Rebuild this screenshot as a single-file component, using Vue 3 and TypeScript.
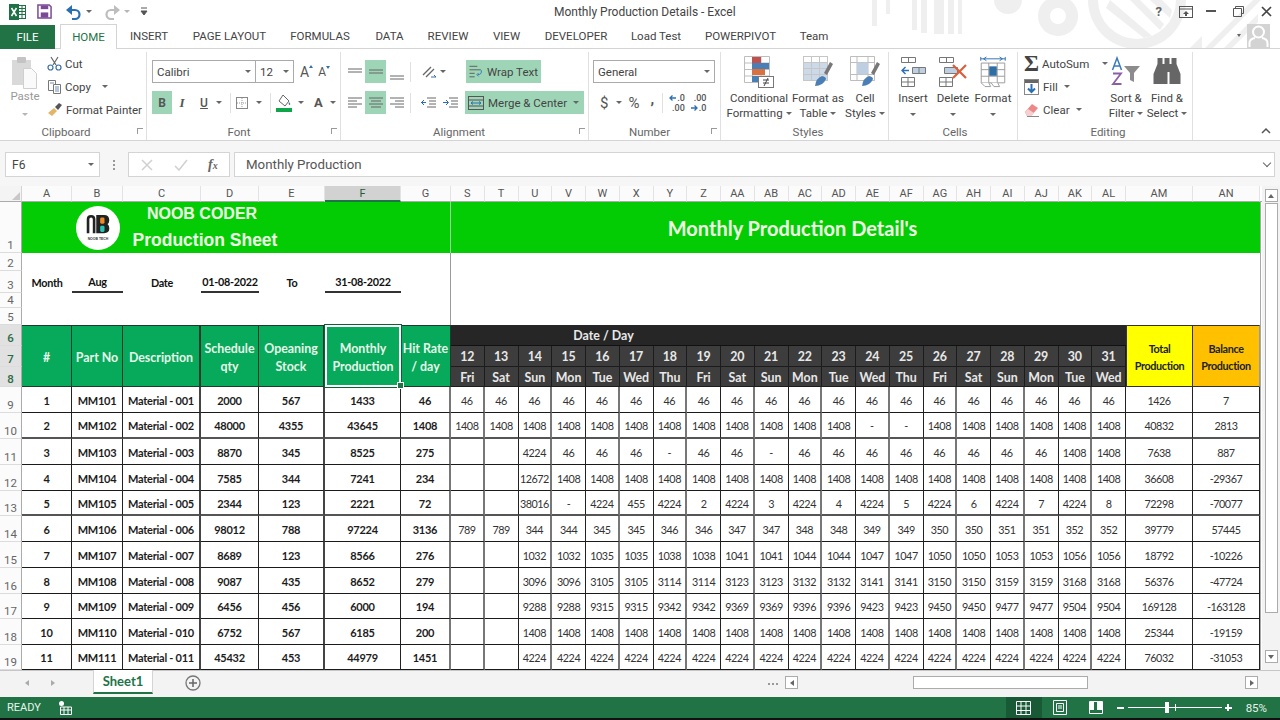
<script setup lang="ts">
interface Row {
  no: number
  head: number
  qty: number
  stock: number
  prod: number
  rate: number
  days: (number | string)[]
  total: number
  bal: number
  thick?: boolean
}

const rep = (v: number | string, n: number) => Array.from({ length: n }, () => v)
const pairs = (start: number, step: number) =>
  Array.from({ length: 18 }, (_, i) => start + Math.floor(i / 2) * step)

const tabs = [
  { t: 'INSERT', w: 64 },
  { t: 'PAGE LAYOUT', w: 97 },
  { t: 'FORMULAS', w: 84 },
  { t: 'DATA', w: 55 },
  { t: 'REVIEW', w: 62 },
  { t: 'VIEW', w: 55 },
  { t: 'DEVELOPER', w: 84 },
  { t: 'Load Test', w: 76 },
  { t: 'POWERPIVOT', w: 93 },
  { t: 'Team', w: 54 },
]

const letters = ['S','T','U','V','W','X','Y','Z','AA','AB','AC','AD','AE','AF','AG','AH','AI','AJ','AK','AL']
const leftLetters = ['A','B','C','D','E','F','G']
const dates = Array.from({ length: 20 }, (_, i) => 12 + i)
const names = ['Sun','Mon','Tue','Wed','Thu','Fri','Sat']
const dayNames = dates.map((d) => names[d % 7])

const leftHeads = [
  ['#'], ['Part No'], ['Description'], ['Schedule', 'qty'], ['Opeaning', 'Stock'],
  ['Monthly', 'Production'], ['Hit Rate', '/ day'],
]

const fifth: (number | string)[] = [38016, '-']
for (let i = 0; i < 8; i++) fifth.push(4224, i === 0 ? 455 : i + 1)

const rows: Row[] = [
  { no: 1, head: 9, qty: 2000, stock: 567, prod: 1433, rate: 46, days: rep(46, 20), total: 1426, bal: 7 },
  { no: 2, head: 10, qty: 48000, stock: 4355, prod: 43645, rate: 1408, days: [...rep(1408, 12), '-', '-', ...rep(1408, 6)], total: 40832, bal: 2813, thick: true },
  { no: 3, head: 11, qty: 8870, stock: 345, prod: 8525, rate: 275, days: ['', '', 4224, 46, 46, 46, '-', 46, 46, '-', ...rep(46, 8), 1408, 1408], total: 7638, bal: 887 },
  { no: 4, head: 12, qty: 7585, stock: 344, prod: 7241, rate: 234, days: ['', '', 12672, ...rep(1408, 17)], total: 36608, bal: -29367 },
  { no: 5, head: 13, qty: 2344, stock: 123, prod: 2221, rate: 72, days: ['', '', ...fifth], total: 72298, bal: -70077, thick: true },
  { no: 6, head: 14, qty: 98012, stock: 788, prod: 97224, rate: 3136, days: [789, 789, ...pairs(344, 1)], total: 39779, bal: 57445 },
  { no: 7, head: 15, qty: 8689, stock: 123, prod: 8566, rate: 276, days: ['', '', ...pairs(1032, 3)], total: 18792, bal: -10226 },
  { no: 8, head: 16, qty: 9087, stock: 435, prod: 8652, rate: 279, days: ['', '', ...pairs(3096, 9)], total: 56376, bal: -47724 },
  { no: 9, head: 17, qty: 6456, stock: 456, prod: 6000, rate: 194, days: ['', '', ...pairs(9288, 27)], total: 169128, bal: -163128 },
  { no: 10, head: 18, qty: 6752, stock: 567, prod: 6185, rate: 200, days: ['', '', ...rep(1408, 18)], total: 25344, bal: -19159 },
  { no: 11, head: 19, qty: 45432, stock: 453, prod: 44979, rate: 1451, days: ['', '', ...rep(4224, 18)], total: 76032, bal: -31053 },
]

const pad = (n: number) => String(n).padStart(3, '0')
</script>

<template>
  <div class="app">
    <!-- title bar -->
    <header class="titlebar">
      <svg class="decor" width="430" height="48" viewBox="850 0 430 48">
        <g fill="#efefef">
          <rect x="872" y="0" width="5" height="26" />
          <rect x="886" y="0" width="4" height="14" />
          <rect x="912" y="0" width="5" height="30" />
          <rect x="921" y="0" width="6" height="33" />
          <rect x="934" y="0" width="10" height="34" />
          <rect x="948" y="0" width="6" height="34" />
          <rect x="958" y="0" width="4" height="34" />
          <circle cx="1008" cy="0" r="14" />
          <path d="M1058 -4a20 20 0 1 0 .1 0zm0 12a8 8 0 1 1-.1 0z" fill-rule="evenodd" />
          <path d="M1088 0a49 49 0 0 0 98 0h-10a39 39 0 0 1-78 0z" />
          <path d="M1110 0l-4 8 38 30 8-2zM1130 0l30 30 4-6-24-24zM1150 0l20 18 2-8-10-10z" />
          <path d="M1205 48l48-48h8l-48 48zM1224 48l34-34v8l-26 26zM1190 48l12-12v12z" />
        </g>
      </svg>
      <div class="qat">
        <svg width="17" height="18" viewBox="0 0 17 18">
          <rect x="5.5" y="2.5" width="11" height="13" fill="#fff" stroke="#1e7145" />
          <path d="M10 5.500h6M10 8.500h6M10 11.500h6M13 3v12" stroke="#1e7145" />
          <rect x="0" y="1" width="10" height="16" fill="#1e7145" />
          <path d="M2.500 5l5 8M7.500 5l-5 8" stroke="#fff" stroke-width="1.600" />
        </svg>
        <svg class="save" width="15" height="15" viewBox="0 0 16 16">
          <path d="M1 1h12l2 2v12H1z" fill="#fff" stroke="#7b4a97" stroke-width="1.600" />
          <rect x="4" y="1.500" width="8" height="4" fill="#7b4a97" />
          <rect x="4" y="9" width="8" height="5.500" fill="#7b4a97" />
        </svg>
        <svg class="undo" width="18" height="16" viewBox="0 0 18 16">
          <path d="M3 6h7a4.500 4.500 0 0 1 0 9H7" fill="none" stroke="#2b6fb3" stroke-width="2.200" />
          <path d="M7 1v10L1 6z" fill="#2b6fb3" />
        </svg>
        <span class="caret dark"></span>
        <svg class="redo" width="18" height="16" viewBox="0 0 18 16">
          <path d="M15 6H8a4.500 4.500 0 0 0 0 9h3" fill="none" stroke="#bdbdbd" stroke-width="2.200" />
          <path d="M11 1v10l6-5z" fill="#bdbdbd" />
        </svg>
        <span class="caret light"></span>
        <svg class="more" width="8" height="9" viewBox="0 0 8 9">
          <path d="M1 1h6M1 4h6L4 8z" stroke="#555" fill="#555" />
        </svg>
      </div>
      <div class="doc">Monthly Production Details - Excel</div>
      <div class="winbtns">
        <span class="help">?</span>
        <svg class="rb-mode" width="14" height="12" viewBox="0 0 14 12">
          <rect x="0.5" y="0.5" width="13" height="11" fill="none" stroke="#555" />
          <path d="M0 3h14" stroke="#555" />
          <path d="M7 5l3 3H8v2H6V8H4z" fill="#555" />
        </svg>
        <svg width="10" height="3" viewBox="0 0 10 3"><rect width="10" height="2" fill="#555" /></svg>
        <svg width="11" height="11" viewBox="0 0 11 11">
          <path d="M2.500 2.500V.5h8v7H8.500M.5 2.500h8v8h-8z" fill="none" stroke="#555" />
        </svg>
        <svg width="11" height="11" viewBox="0 0 11 11">
          <path d="M1 1l9 9M10 1l-9 9" stroke="#444" stroke-width="1.700" />
        </svg>
      </div>
    </header>

    <!-- ribbon tabs -->
    <nav class="tabs">
      <div class="tab-file">FILE</div>
      <div class="tab-home">HOME</div>
      <div v-for="t in tabs" :key="t.t" class="tab" :style="{ width: t.w + 'px' }">{{ t.t }}</div>
      <span class="account-caret"></span>
      <div class="avatar">
        <svg width="23" height="23" viewBox="0 0 23 23">
          <circle cx="11.500" cy="8" r="5.500" fill="none" stroke="#fff" stroke-width="2" />
          <path d="M2.500 23v-4q0-4 5.500-5M20.500 23v-4q0-4-5.500-5" fill="none" stroke="#fff" stroke-width="2" />
        </svg>
      </div>
    </nav>

    <!-- ribbon -->
    <section class="ribbon">
      <div class="group g-clip">
        <div class="g-body clip-body">
          <div class="paste">
            <svg width="26" height="33" viewBox="0 0 26 33">
              <rect x="0" y="4" width="19" height="25" fill="#d9d9d9" />
              <rect x="5" y="1" width="9" height="6" rx="1" fill="#c4c4c4" />
              <path d="M11.500 12.500h8l5 5v15h-13z" fill="#fafafa" stroke="#cfcfcf" />
            </svg>
            <span class="t-dim">Paste</span>
            <span class="caret light"></span>
          </div>
          <div class="clip-list">
            <div class="clip-item">
              <svg width="15" height="15" viewBox="0 0 15 15">
                <path d="M4 1l5 8M11 1L6 9" stroke="#666" stroke-width="1.200" />
                <circle cx="3.500" cy="11.500" r="2.500" fill="none" stroke="#3a6ea5" stroke-width="1.200" />
                <circle cx="11.500" cy="11.500" r="2.500" fill="none" stroke="#3a6ea5" stroke-width="1.200" />
              </svg>
              <span>Cut</span>
            </div>
            <div class="clip-item">
              <svg width="15" height="15" viewBox="0 0 15 15">
                <path d="M1.500 1.500h7v10h-7z" fill="#fff" stroke="#777" />
                <path d="M6.500 5.500h7v9h-7z" fill="#fff" stroke="#777" />
                <path d="M8 8h4M8 10h4M8 12h4M3 4h4" stroke="#6a8fb5" />
              </svg>
              <span>Copy</span>
              <span class="caret dark ml8"></span>
            </div>
            <div class="clip-item">
              <svg width="16" height="15" viewBox="0 0 16 15">
                <path d="M1 11l6-5 3 3-5 5z" fill="#e3b566" />
                <path d="M8 5l4-4 3 2-4 5z" fill="#555" />
              </svg>
              <span>Format Painter</span>
            </div>
          </div>
        </div>
        <div class="g-label has-launcher">Clipboard<span class="launcher"></span></div>
      </div>

      <div class="group g-font">
        <div class="g-body two-rows">
          <div class="r">
            <div class="select font-name"><span>Calibri</span><span class="caret dark"></span></div>
            <div class="select font-size"><span>12</span><span class="caret dark"></span></div>
            <span class="grow-a big">A<i></i></span>
            <span class="grow-a small">A<i></i></span>
          </div>
          <div class="r">
            <span class="fbtn on b">B</span>
            <span class="fbtn i">I</span>
            <span class="fbtn u">U</span>
            <span class="caret dark"></span>
            <span class="vsep s1"></span>
            <svg class="ml5" width="12" height="12" viewBox="0 0 12 12">
              <rect x="0.500" y="0.500" width="11" height="11" fill="none" stroke="#888" />
              <path d="M6 1v10M1 6h10" stroke="#999" stroke-dasharray="1 1" />
            </svg>
            <span class="caret dark ml8"></span>
            <span class="vsep s1"></span>
            <svg class="ml5" width="17" height="18" viewBox="0 0 17 18">
              <path d="M7 1l6 6-4 5-6-5z" fill="#fff" stroke="#666" />
              <path d="M13 8q2 2 1 3-2 0-1-3z" fill="#3a6ea5" />
              <rect x="0" y="14" width="16" height="4" fill="#0fa54b" />
            </svg>
            <span class="caret dark ml5"></span>
            <span class="font-color">A</span>
            <span class="caret dark ml7"></span>
          </div>
        </div>
        <div class="g-label has-launcher">Font<span class="launcher"></span></div>
      </div>

      <div class="group g-align">
        <div class="g-body two-rows">
          <div class="r">
            <span class="abtn"><svg width="14" height="8" viewBox="0 0 14 8"><path d="M0 1h14M0 4h14" stroke="#666" /></svg></span>
            <span class="abtn on"><svg width="14" height="8" viewBox="0 0 14 8"><path d="M0 2h14M0 5h14" stroke="#666" /></svg></span>
            <span class="abtn va-b"><svg width="14" height="8" viewBox="0 0 14 8"><path d="M0 2h14M0 5h14" stroke="#666" /></svg></span>
            <span class="vsep s2"></span>
            <svg class="ml10" width="16" height="14" viewBox="0 0 16 14">
              <path d="M2 10l8-8M5 12l8-8" stroke="#666" stroke-width="1.300" />
              <path d="M10 12h5l-2-2" fill="none" stroke="#3a6ea5" />
            </svg>
            <span class="caret dark ml3"></span>
            <div class="wide-btn wrap">
              <svg width="16" height="14" viewBox="0 0 16 14">
                <path d="M.5.500h9M.5 4.500h13M.5 8.500h6M.5 12.500h6" stroke="#555" />
                <path d="M14 5q1 5-4 5M11 8l-2 2 2 2" fill="none" stroke="#2b6fb3" />
              </svg>
              <span>Wrap Text</span>
            </div>
          </div>
          <div class="r">
            <span class="abtn"><svg width="14" height="11" viewBox="0 0 14 11"><path d="M0 1h14M0 4h9M0 7h14M0 10h9" stroke="#666" /></svg></span>
            <span class="abtn on"><svg width="14" height="11" viewBox="0 0 14 11"><path d="M0 1h14M2 4h10M0 7h14M2 10h10" stroke="#666" /></svg></span>
            <span class="abtn"><svg width="14" height="11" viewBox="0 0 14 11"><path d="M0 1h14M5 4h9M0 7h14M5 10h9" stroke="#666" /></svg></span>
            <span class="vsep s2"></span>
            <svg class="ml10" width="15" height="11" viewBox="0 0 15 11">
              <path d="M6 1h9M8 4h7M8 7h7M6 10h9" stroke="#666" />
              <path d="M0 5.500h5M3 3L.5 5.500 3 8" fill="none" stroke="#2b6fb3" />
            </svg>
            <svg class="ml7" width="15" height="11" viewBox="0 0 15 11">
              <path d="M6 1h9M8 4h7M8 7h7M6 10h9" stroke="#666" />
              <path d="M0 5.500h5M3 3l2.500 2.500L3 8" fill="none" stroke="#2b6fb3" />
            </svg>
            <div class="wide-btn merge">
              <svg width="16" height="14" viewBox="0 0 16 14">
                <rect x="0.500" y="0.500" width="15" height="13" fill="none" stroke="#555" />
                <path d="M1 4h14M1 10h14" stroke="#555" />
                <path d="M3 7h10M5 5.500L3 7l2 1.500M11 5.500L13 7l-2 1.500" fill="none" stroke="#2b6fb3" />
              </svg>
              <span>Merge &amp; Center</span>
              <span class="caret dark ml-a"></span>
            </div>
          </div>
        </div>
        <div class="g-label has-launcher">Alignment<span class="launcher"></span></div>
      </div>

      <div class="group g-num">
        <div class="g-body two-rows">
          <div class="r">
            <div class="select num-fmt"><span>General</span><span class="caret dark"></span></div>
          </div>
          <div class="r num-row">
            <span class="dollar">$</span>
            <span class="caret dark ml8"></span>
            <span class="pct">%</span>
            <span class="comma">,</span>
            <span class="vsep s3"></span>
            <span class="dec d1">
              <span class="dec-l"><svg width="7" height="6" viewBox="0 0 7 6"><path d="M7 3H1M3.500 .5L1 3l2.500 2.500" fill="none" stroke="#2b6fb3" stroke-width="1.300" /></svg>.0</span>
              <span class="dec-l">.00</span>
            </span>
            <span class="dec d2">
              <span class="dec-l">.00</span>
              <span class="dec-l"><svg width="7" height="6" viewBox="0 0 7 6"><path d="M0 3h6M3.500 .5L6 3 3.500 5.500" fill="none" stroke="#2b6fb3" stroke-width="1.300" /></svg>.0</span>
            </span>
          </div>
        </div>
        <div class="g-label has-launcher">Number<span class="launcher"></span></div>
      </div>

      <div class="group g-styles">
        <div class="g-body bigs">
          <div class="big-btn w62">
            <svg width="30" height="32" viewBox="0 0 30 32">
              <path d="M.5.500h25v26H.5zM8.500.500v26M17 .500v26M.5 7h25M.5 13.500h25M.5 20h25" fill="#fff" stroke="#bdbdbd" />
              <rect x="8" y="1" width="9" height="6" fill="#c0504d" />
              <rect x="8" y="7" width="17" height="6" fill="#4a7fb5" />
              <rect x="8" y="13" width="13" height="6" fill="#d9703f" />
              <rect x="8" y="20" width="6" height="6" fill="#4a7fb5" />
              <rect x="14.500" y="20.500" width="15" height="11" fill="#fff" stroke="#777" />
              <path d="M19 24h6M19 27h6M24 22l-4 8" stroke="#444" />
            </svg>
            <span>Conditional</span>
            <span>Formatting<i class="caret dark"></i></span>
          </div>
          <div class="big-btn w58">
            <svg width="30" height="32" viewBox="0 0 30 32">
              <path d="M.5.500h24v24H.5zM8.500.500v24M16.500.500v24M.5 6.500h24M.5 12.500h24M.5 18.500h24" fill="#fff" stroke="#bdbdbd" />
              <rect x="1" y="7" width="23" height="17" fill="#bfcfe2" opacity="0.800" />
              <path d="M.5.500h24v24H.5zM8.500.500v24M16.500.500v24M.5 6.500h24M.5 12.500h24M.5 18.500h24" fill="none" stroke="#c6c6c6" />
              <path d="M21 17l6-11 3 2-6 11z" fill="#777" />
              <path d="M12 30q1-8 7-10 4 1 4 3-3 7-11 7z" fill="#4a7fb5" />
            </svg>
            <span>Format as</span>
            <span>Table<i class="caret dark"></i></span>
          </div>
          <div class="big-btn w40">
            <svg width="30" height="32" viewBox="0 0 30 32">
              <path d="M.5.500h24v24H.5zM.5 6.500h24M.5 18.500h24M7 .500v24M18 .500v24" fill="#fff" stroke="#bdbdbd" />
              <rect x="7" y="6.500" width="11" height="12" fill="#bfcfe2" />
              <path d="M21 17l6-11 3 2-6 11z" fill="#777" />
              <path d="M12 30q1-8 7-10 4 1 4 3-3 7-11 7z" fill="#4a7fb5" />
            </svg>
            <span>Cell</span>
            <span>Styles<i class="caret dark"></i></span>
          </div>
        </div>
        <div class="g-label">Styles</div>
      </div>

      <div class="group g-cells">
        <div class="g-body bigs">
          <div class="big-btn w40">
            <svg width="26" height="32" viewBox="0 0 26 32">
              <path d="M1.500 1.500h14v5h-14zM8.500 1.500v5M1.500 21.500h13v9h-13zM8 21.500v9M1.500 26h13" fill="#fff" stroke="#777" />
              <path d="M12.500 11.500h13v6h-13zM19 11.500v6" fill="#bfcfe2" stroke="#777" />
              <path d="M2 14.500h7M5.500 11L2 14.500 5.500 18" fill="none" stroke="#2b6fb3" stroke-width="1.400" />
            </svg>
            <span>Insert</span>
            <i class="caret dark mt"></i>
          </div>
          <div class="big-btn w40">
            <svg width="30" height="32" viewBox="0 0 30 32">
              <path d="M1.500 1.500h14v5h-14zM8.500 1.500v5M1.500 21.500h13v9h-13zM8 21.500v9M1.500 26h13" fill="#fff" stroke="#777" />
              <path d="M6.500 11.500h13v6h-13z" fill="#bfcfe2" stroke="#777" />
              <path d="M15 9l13 13M28 9L15 22" stroke="#d9603a" stroke-width="2.200" />
            </svg>
            <span>Delete</span>
            <i class="caret dark mt"></i>
          </div>
          <div class="big-btn w40">
            <svg width="28" height="32" viewBox="0 0 28 34">
              <path d="M1 3h26M1 1v4M27 1v4" stroke="#2b6fb3" />
              <path d="M4 3l3-2M4 3l3 2M24 3l-3-2M24 3l-3 2" stroke="#2b6fb3" />
              <path d="M1.500 7.500h25v21H1.500zM9.500 7.500v21M18.500 7.500v21M1.500 14.500h25M1.500 21.500h25" fill="#fff" stroke="#999" />
              <rect x="10" y="11" width="8" height="10" fill="#2f6ea5" />
              <path d="M1.500 28.500l4 4h6l-2-4M12 28.500l3 4h6l-2-4" fill="#fff" stroke="#999" />
            </svg>
            <span>Format</span>
            <i class="caret dark mt"></i>
          </div>
        </div>
        <div class="g-label">Cells</div>
      </div>

      <div class="group g-edit">
        <div class="g-body edit-body">
          <div class="edit-list">
            <div class="edit-item">
              <span class="sigma">Σ</span><span>AutoSum</span><span class="caret dark ml10"></span>
            </div>
            <div class="edit-item">
              <svg width="16" height="16" viewBox="0 0 16 16">
                <rect x="0.500" y="0.500" width="14" height="15" fill="#fff" stroke="#888" />
                <rect x="1" y="1" width="13" height="3" fill="#666" />
                <path d="M7.500 5v8M4 9.500l3.500 3.500L11 9.500" fill="none" stroke="#2b6fb3" stroke-width="2" />
              </svg>
              <span>Fill</span><span class="caret dark ml3"></span>
            </div>
            <div class="edit-item">
              <svg width="16" height="14" viewBox="0 0 16 14">
                <path d="M1 9l7-8 6 4-7 8H3z" fill="#e88" />
                <path d="M1 9l3-3 6 4-3 3H3z" fill="#f6d0d0" />
                <path d="M3 13.500h12" stroke="#888" />
              </svg>
              <span>Clear</span><span class="caret dark ml3"></span>
            </div>
          </div>
          <div class="big-btn w40 sort">
            <svg width="30" height="32" viewBox="0 0 30 32">
              <path d="M13 10h16l-6 7v9l-4-2v-7z" fill="#8c8c8c" />
              <path d="M1.500 14L6 2l4.500 12M3.500 10h5" fill="none" stroke="#3a7ab8" stroke-width="1.500" />
              <path d="M2 17.500h8L2 28h8.500" fill="none" stroke="#8b5fa8" stroke-width="1.800" />
            </svg>
            <span>Sort &amp;</span>
            <span>Filter<i class="caret dark"></i></span>
          </div>
          <div class="big-btn w40 find">
            <svg width="28" height="32" viewBox="0 0 28 32">
              <path d="M5 2h5v6h2V2h4v0h1v6h2V2h5v6l4 10v10h-11V16h-2v12H1V18l4-10z" fill="#666" transform="translate(-0.500 0)" />
            </svg>
            <span>Find &amp;</span>
            <span>Select<i class="caret dark"></i></span>
          </div>
        </div>
        <div class="g-label">Editing</div>
      </div>
      <svg class="collapse" width="10" height="7" viewBox="0 0 10 7">
        <path d="M1 6l4-4 4 4" fill="none" stroke="#555" stroke-width="1.500" />
      </svg>
    </section>

    <!-- formula bar -->
    <section class="formula">
      <div class="namebox"><span>F6</span><span class="caret dark"></span></div>
      <div class="dots"><i></i><i></i><i></i></div>
      <div class="fx-box">
        <svg width="12" height="12" viewBox="0 0 12 12"><path d="M1 1l10 10M11 1L1 11" stroke="#d0d0d0" stroke-width="1.500" /></svg>
        <svg width="14" height="12" viewBox="0 0 14 12"><path d="M1 7l4 4 8-10" fill="none" stroke="#d0d0d0" stroke-width="1.500" /></svg>
        <span class="fx">f<small>x</small></span>
      </div>
      <div class="f-input">
        <span>Monthly Production</span>
        <span class="f-caret"></span>
      </div>
    </section>

    <!-- sheet -->
    <main class="sheet">
      <div class="grid">
        <div class="corner"><svg width="10" height="10" viewBox="0 0 10 10"><path d="M9 1v8H1z" fill="#c8c8c8" /></svg></div>
        <div v-for="l in leftLetters" :key="l" class="col-h" :class="{ sel: l === 'F' }">{{ l }}</div>
        <div v-for="l in letters" :key="l" class="col-h">{{ l }}</div>
        <div class="col-h">AM</div>
        <div class="col-h">AN</div>
        <div class="col-h end"></div>

        <!-- row 1 -->
        <div class="row-h">1</div>
        <div class="banner-left">
          <div class="logo">
            <svg width="26" height="32" viewBox="0 0 30 36">
              <path d="M2 24V8q0-5 5-5t5 5v16H9V8q0-2-2-2T5 8v16z" fill="#222" />
              <path d="M13 3h9q6 0 6 6 0 3-2 4.500 2 1.500 2 4.500v1q0 5-6 5h-9z" fill="#222" />
              <rect x="17.500" y="6" width="5" height="7" rx="1.500" fill="#f08a24" />
              <rect x="17.500" y="15.500" width="5" height="7" rx="1.500" fill="#27c3b5" />
              <text x="15" y="32" text-anchor="middle" font-size="4" font-family="Liberation Sans, sans-serif" font-weight="700" fill="#333">NOOB TECH</text>
            </svg>
          </div>
          <div class="brand">
            <div class="brand-1">NOOB CODER</div>
            <div class="brand-2">Production Sheet</div>
          </div>
        </div>
        <div class="banner-right">Monthly Production Detail's</div>
        <div class="filler"></div>

        <!-- rows 2-5 -->
        <div class="row-h">2</div>
        <div class="blank span7"></div>
        <div class="blank-right"></div>
        <div class="row-h">3</div>
        <div class="info">Month</div>
        <div class="info ul">Aug</div>
        <div class="info">Date</div>
        <div class="info ul">01-08-2022</div>
        <div class="info">To</div>
        <div class="info ul">31-08-2022</div>
        <div class="info last"></div>
        <div class="row-h">4</div>
        <div class="blank span7"></div>
        <div class="row-h">5</div>
        <div class="blank span7"></div>

        <!-- header rows 6-8 -->
        <div class="row-h sel">6</div>
        <div
          v-for="(h, i) in leftHeads"
          :key="i"
          class="head"
          :class="{ selected: i === 5, 'thick-r': i === 2 || i === 4 }"
        >
          <span v-for="line in h" :key="line">{{ line }}</span>
        </div>
        <div class="date-day">Date / Day</div>
        <div class="head-total">Total<br />Production</div>
        <div class="head-bal">Balance<br />Production</div>
        <div class="filler"></div>

        <div class="row-h sel">7</div>
        <div v-for="d in dates" :key="d" class="date-c">{{ d }}</div>
        <div class="filler"></div>

        <div class="row-h sel">8</div>
        <div v-for="(d, i) in dayNames" :key="i" class="date-n">{{ d }}</div>
        <div class="filler"></div>

        <!-- data rows -->
        <template v-for="r in rows" :key="r.no">
          <div class="row-h">{{ r.head }}</div>
          <div class="cell bold" :class="{ tb: r.thick }">{{ r.no }}</div>
          <div class="cell bold" :class="{ tb: r.thick }">MM{{ 100 + r.no }}</div>
          <div class="cell bold thick-r" :class="{ tb: r.thick }">Material - {{ pad(r.no) }}</div>
          <div class="cell bold" :class="{ tb: r.thick }">{{ r.qty }}</div>
          <div class="cell bold thick-r" :class="{ tb: r.thick }">{{ r.stock }}</div>
          <div class="cell bold" :class="{ tb: r.thick }">{{ r.prod }}</div>
          <div class="cell bold thick-g" :class="{ tb: r.thick }">{{ r.rate }}</div>
          <div
            v-for="(d, i) in r.days"
            :key="i"
            class="cell"
            :class="{ tb: r.thick, 'thick-g': i % 2 === 0 }"
          >{{ d }}</div>
          <div class="cell" :class="{ tb: r.thick }">{{ r.total }}</div>
          <div class="cell" :class="{ tb: r.thick }">{{ r.bal }}</div>
          <div class="filler"></div>
        </template>
      </div>

      <div class="vscroll">
        <span class="sb-btn"><i class="arrow-up"></i></span>
        <span class="sb-thumb"></span>
        <span class="sb-track"></span>
        <span class="sb-btn"><i class="arrow-down"></i></span>
      </div>
    </main>

    <!-- sheet tabs -->
    <section class="sheetbar">
      <i class="tri left"></i>
      <i class="tri right"></i>
      <div class="sheet-tab">Sheet1</div>
      <svg class="add" width="16" height="16" viewBox="0 0 16 16">
        <circle cx="8" cy="8" r="7" fill="none" stroke="#777" stroke-width="1.300" />
        <path d="M4 8h8M8 4v8" stroke="#666" stroke-width="1.500" />
      </svg>
      <div class="hdots"><i></i><i></i><i></i></div>
      <div class="hscroll">
        <span class="sb-btn"><i class="tri-s left"></i></span>
        <div class="h-track"><span class="h-thumb"></span></div>
        <span class="sb-btn"><i class="tri-s right"></i></span>
      </div>
    </section>

    <!-- status bar -->
    <footer class="status">
      <span class="ready">READY</span>
      <svg class="macro" width="13" height="14" viewBox="0 0 13 14">
        <circle cx="2.500" cy="2.500" r="2.500" fill="#fff" />
        <path d="M1.500 6h11v7.500h-11zM5 6v7.500M9 6v7.500M1.500 9h11" fill="none" stroke="#fff" />
      </svg>
      <div class="views">
        <span class="view on">
          <svg width="15" height="14" viewBox="0 0 15 14"><path d="M.5.500h14v13H.5zM5 .500v13M10 .500v13M.5 5h14M.5 9.500h14" fill="none" stroke="#fff" /></svg>
        </span>
        <span class="view">
          <svg width="14" height="15" viewBox="0 0 14 15"><path d="M.5.500h13v14H.5z" fill="none" stroke="#fff" /><path d="M3.500 3.500h7v8h-7zM5 6h4M5 8h4" fill="none" stroke="#fff" /></svg>
        </span>
        <span class="view">
          <svg width="14" height="13" viewBox="0 0 14 13"><path d="M.5.500h13v12H.5z" fill="none" stroke="#fff" /><path d="M1 1h4v8H1zM8 1h5v8H8z" fill="#fff" /></svg>
        </span>
      </div>
      <div class="zoom">
        <span class="z-sign minus"></span>
        <div class="z-track"><span class="z-mid"></span><span class="z-thumb"></span></div>
        <span class="z-sign plus"></span>
      </div>
      <span class="pct-text">85%</span>
    </footer>
    <div class="bottom"></div>
  </div>
</template>

<style>
html, body { margin: 0; background: #fff; overflow: hidden; }
</style>

<style scoped>
.app {
  width: 1280px;
  height: 720px;
  display: flex;
  flex-direction: column;
  overflow: hidden;
  background: #fff;
  font-family: Roboto, "Open Sans", sans-serif;
  font-size: 11.5px;
  color: #444;
}

.caret {
  display: inline-block;
  width: 0;
  height: 0;
  border-left: 3px solid transparent;
  border-right: 3px solid transparent;
  border-top: 3px solid #666;
  flex: none;
}
.caret.light { border-top-color: #b5b5b5; }
.ml3 { margin-left: 3px; }
.ml5 { margin-left: 5px; }
.ml7 { margin-left: 7px; }
.ml8 { margin-left: 8px; }
.ml10 { margin-left: 10px; }
.ml-a { margin-left: auto; }

/* title bar */
.titlebar {
  height: 23px;
  flex: none;
  display: flex;
  align-items: center;
  position: relative;
}
.decor { position: absolute; left: 850px; top: 0; z-index: 0; }
.qat {
  width: 554px;
  flex: none;
  display: flex;
  align-items: center;
  padding-left: 9px;
  box-sizing: border-box;
  position: relative;
}
.save { margin-left: 11px; }
.undo { margin-left: 13px; }
.qat .caret { margin-left: 3px; }
.redo { margin-left: 11px; }
.more { margin-left: 10px; }
.doc { font-size: 12px; color: #444; position: relative; white-space: nowrap; }
.winbtns {
  margin-left: auto;
  display: flex;
  align-items: center;
  gap: 17px;
  padding-right: 8px;
  position: relative;
}
.rb-mode { margin-right: -4px; }
.help { font-weight: 700; font-size: 13px; color: #666; }

/* tabs */
.tabs {
  height: 26px;
  flex: none;
  display: flex;
  align-items: flex-end;
  border-bottom: 1px solid #d4d4d4;
  box-sizing: border-box;
  position: relative;
}
.tab-file {
  width: 55px;
  height: 24px;
  background: #217346;
  color: #fff;
  display: flex;
  align-items: center;
  justify-content: center;
  margin-right: 5px;
  align-self: flex-end;
  margin-bottom: -1px;
}
.tab-home {
  width: 57px;
  height: 25px;
  box-sizing: border-box;
  border: 1px solid #d4d4d4;
  border-bottom: none;
  background: #fff;
  color: #217346;
  display: flex;
  align-items: center;
  justify-content: center;
  margin-bottom: -1px;
}
.tab {
  height: 24px;
  display: flex;
  align-items: center;
  justify-content: center;
  color: #444;
  white-space: nowrap;
  flex: none;
}
.account-caret {
  margin-left: auto;
  align-self: center;
  width: 0;
  height: 0;
  border-left: 2.5px solid transparent;
  border-right: 2.5px solid transparent;
  border-top: 3px solid #666;
}
.avatar {
  width: 23px;
  height: 24px;
  margin: 0 10px 0 6px;
  background: #d3d3d3;
  overflow: hidden;
}

/* ribbon */
.ribbon {
  height: 92px;
  flex: none;
  display: flex;
  border-bottom: 1px solid #d4d4d4;
  box-sizing: border-box;
  position: relative;
}
.group {
  flex: none;
  height: 88px;
  margin-top: 3px;
  box-sizing: border-box;
  border-right: 1px solid #e0e0e0;
  display: flex;
  flex-direction: column;
}
.g-clip { width: 147px; }
.g-font { width: 194px; padding-left: 5px; }
.g-align { width: 248px; padding-left: 3px; }
.g-num { width: 132px; padding-left: 4px; }
.g-styles { width: 168px; padding-left: 7px; }
.g-cells { width: 129px; padding-left: 4px; }
.g-edit { width: 175px; padding-left: 6px; }
.g-body { flex: 1; min-height: 0; }
.g-label {
  height: 18px;
  box-sizing: border-box;
  padding-top: 2px;
  display: flex;
  align-items: center;
  justify-content: center;
  color: #666;
  font-size: 11.5px;
  position: relative;
}
.g-label.has-launcher { padding-right: 14px; }
.launcher {
  position: absolute;
  right: 3px;
  top: 6px;
  width: 6px;
  height: 6px;
  border-left: 1px solid #999;
  border-top: 1px solid #999;
  box-sizing: border-box;
}

.clip-body { display: flex; padding: 2px 0 0 12px; }
.paste {
  width: 26px;
  display: flex;
  flex-direction: column;
  align-items: center;
  padding-top: 2px;
}
.paste svg { flex: none; }
.t-dim { color: #999; }
.paste .caret { margin-top: 10px; }
.clip-list {
  display: flex;
  flex-direction: column;
  margin-left: 9px;
  gap: 4px;
}
.clip-item {
  height: 19px;
  display: flex;
  align-items: center;
  gap: 3px;
  white-space: nowrap;
}

.two-rows {
  display: flex;
  flex-direction: column;
  gap: 8px;
  padding-top: 8px;
}
.r { display: flex; align-items: center; height: 23px; }
.select {
  height: 23px;
  box-sizing: border-box;
  border: 1px solid #aaa;
  background: #fff;
  display: flex;
  align-items: center;
  justify-content: space-between;
  padding: 0 4px;
  color: #444;
}
.font-name { width: 104px; }
.font-size { width: 39px; margin-left: -1px; }
.num-fmt { width: 122px; }
.grow-a {
  position: relative;
  font-size: 14px;
  color: #555;
  line-height: 1;
}
.grow-a.big { margin-left: 6px; }
.grow-a.small { margin-left: 9px; font-size: 12px; }
.grow-a i {
  position: absolute;
  right: -4px;
  top: 0;
  width: 0;
  height: 0;
  border-left: 2.5px solid transparent;
  border-right: 2.5px solid transparent;
  border-bottom: 3px solid #3a6ea5;
}
.grow-a.small i { border-bottom: none; border-top: 3px solid #3a6ea5; }
.fbtn {
  width: 20px;
  height: 23px;
  display: flex;
  align-items: center;
  justify-content: center;
  color: #555;
  font-family: "Liberation Serif", serif;
  font-size: 13px;
}
.fbtn.on { background: #9fd5b7; }
.fbtn.b { font-family: Roboto, sans-serif; font-weight: 700; font-size: 12px; }
.fbtn.i { font-style: italic; font-weight: 700; }
.fbtn.u { text-decoration: underline; font-family: Roboto, sans-serif; font-weight: 500; font-size: 12px; margin-left: 2px; margin-right: 2px; }
.vsep { width: 1px; height: 20px; background: #e0e0e0; flex: none; }
.vsep.s1 { margin-left: 8px; }
.vsep.s2 { margin-left: 3px; }
.vsep.s3 { margin-left: 8px; }
.font-color { margin-left: 10px; font-weight: 700; font-size: 13px; color: #555; }

.abtn {
  width: 21px;
  height: 23px;
  display: flex;
  align-items: center;
  justify-content: center;
}
.abtn.on { background: #9fd5b7; }
.abtn.va-b { align-items: flex-end; padding-bottom: 1px; box-sizing: border-box; }
.wide-btn {
  height: 23px;
  box-sizing: border-box;
  background: #9fd5b7;
  display: flex;
  align-items: center;
  gap: 4px;
  padding: 0 3px;
  color: #444;
  white-space: nowrap;
}
.wrap { width: 75px; margin-left: 20px; }
.merge { width: 119px; margin-left: 7px; padding-right: 5px; }

.num-row { color: #555; }
.dollar { font-size: 15px; margin-left: 7px; }
.pct { font-size: 15px; margin-left: 6px; }
.comma { font-size: 15px; font-weight: 700; margin-left: 11px; margin-top: -7px; }
.dec {
  display: flex;
  flex-direction: column;
  align-items: flex-end;
  font-size: 9px;
  line-height: 10px;
  font-weight: 500;
  color: #555;
}
.dec-l { display: flex; align-items: center; gap: 1px; }
.d1 { margin-left: 6px; }
.d2 { margin-left: 6px; }

.bigs { display: flex; padding-top: 4px; }
.big-btn {
  display: flex;
  flex-direction: column;
  align-items: center;
  flex: none;
  line-height: 15px;
  white-space: nowrap;
  color: #444;
}
.big-btn svg { flex: none; margin-bottom: 3px; }
.big-btn i.caret { margin-left: 3px; vertical-align: middle; }
.big-btn i.mt { margin: 7px 0 0; }
.w62 { width: 62px; }
.w58 { width: 58px; margin-left: -1px; }
.w40 { width: 40px; }
.g-styles .w40 { margin-left: -2px; }
.edit-body { display: flex; padding-top: 2px; }
.edit-list { width: 82px; display: flex; flex-direction: column; gap: 4px; flex: none; }
.edit-item { height: 19px; display: flex; align-items: center; gap: 3px; white-space: nowrap; }
.sigma { font-size: 23px; font-weight: 700; color: #444; line-height: 1; font-family: "Liberation Serif", serif; width: 16px; text-align: center; }
.sort { margin-left: 0; padding-top: 2px; }
.find { margin-left: 1px; padding-top: 2px; }
.collapse { position: absolute; right: 9px; bottom: 6px; }

/* formula bar */
.formula {
  height: 45px;
  flex: none;
  background: #f6f6f6;
  display: flex;
  align-items: flex-start;
  padding: 11px 5px 0;
  box-sizing: border-box;
}
.namebox, .fx-box, .f-input {
  height: 25px;
  box-sizing: border-box;
  background: #fff;
  border: 1px solid #d4d4d4;
  display: flex;
  align-items: center;
  flex: none;
}
.namebox { width: 95px; padding: 0 5px 0 6px; justify-content: space-between; font-size: 12px; color: #444; }
.dots { width: 28px; height: 25px; display: flex; flex-direction: column; align-items: center; justify-content: center; gap: 2px; flex: none; }
.dots i { width: 2px; height: 2px; background: #999; }
.fx-box { width: 102px; padding-left: 12px; gap: 21px; }
.fx { font-family: "Liberation Serif", serif; font-style: italic; font-weight: 700; color: #666; font-size: 14px; margin-left: -1px; }
.fx small { font-size: 10px; }
.f-input { width: 1041px; margin-left: 4px; padding: 0 4px 0 11px; font-size: 13.3px; color: #555; justify-content: space-between; }
.f-caret { width: 5px; height: 5px; border-right: 1px solid #666; border-bottom: 1px solid #666; transform: rotate(45deg); margin-top: -3px; }

/* sheet */
.sheet { height: 484px; flex: none; display: flex; overflow: hidden; }
.grid {
  width: 1262px;
  flex: none;
  display: grid;
  grid-template-columns: 22px 50px 51px 78px 58px 66px 76px 50px repeat(20, 33.75px) 67px 67px 2px;
  grid-template-rows: 16px 51px 18px 22px 15px 17px 21px 21px 20px 26px 26px 26px 26px 25px 26px 26px 26px 25px 26px 25px;
  font-family: Lato, "Liberation Sans", sans-serif;
  font-size: 11px;
  color: #111;
}
.corner {
  background: #f4f4f4;
  border-right: 1px solid #d4d4d4;
  border-bottom: 1px solid #ababab;
  box-sizing: border-box;
  display: flex;
  align-items: flex-end;
  justify-content: flex-end;
}
.col-h {
  background: #fbfbfb;
  border-right: 1px solid #e3e3e3;
  border-bottom: 1px solid #ababab;
  box-sizing: border-box;
  display: flex;
  align-items: center;
  justify-content: center;
  font-size: 11px;
  color: #555;
  line-height: 1;
  font-family: Roboto, sans-serif;
}
.col-h.sel { background: #d2d2d2; border-bottom: 2px solid #217346; color: #1e5e3a; }
.col-h.end { border-right: none; background: #fff; }
.row-h {
  background: #fbfbfb;
  border-right: 1px solid #ababab;
  border-bottom: 1px solid #dcdcdc;
  box-sizing: border-box;
  display: flex;
  align-items: flex-end;
  justify-content: center;
  font-size: 11.5px;
  color: #666;
  line-height: 13px;
  font-family: Roboto, sans-serif;
}
.row-h.sel { background: #e1e1e1; color: #2c6a47; font-weight: 500; }
.banner-left {
  grid-column: span 7;
  background: #04cc04;
  display: flex;
  align-items: center;
  padding-left: 54px;
  box-sizing: border-box;
  border-right: 1px solid #9ccf9c;
}
.logo {
  width: 44px;
  height: 44px;
  border-radius: 50%;
  background: #fff;
  display: flex;
  align-items: center;
  justify-content: center;
  flex: none;
}
.brand {
  width: 170px;
  text-align: center;
  font-family: "Liberation Sans", sans-serif;
  font-weight: 700;
  color: #eefbe6;
  margin-top: 1px;
}
.brand-1 { font-size: 16px; line-height: 24px; margin-left: -6px; }
.brand-2 { font-size: 17.5px; line-height: 28px; }
.banner-right {
  grid-column: span 22;
  background: #04cc04;
  display: flex;
  align-items: center;
  justify-content: center;
  color: #f0fbe6;
  font-size: 20px;
  font-weight: 700;
  padding-right: 126px;
  box-sizing: border-box;
}
.filler { background: #fff; border-left: 1px solid #a8a8a8; }
.blank { background: #fff; }
.span7 { grid-column: span 7; border-right: 1px solid #9a9a9a; box-sizing: border-box; }
.blank-right {
  grid-column: span 23;
  grid-row: span 4;
  background: #fff;
  margin-right: 1px;
  border-right: 1px solid #a8a8a8;
}
.info {
  display: flex;
  align-items: center;
  justify-content: center;
  font-weight: 700;
  font-size: 10.8px;
  letter-spacing: -0.25px;
  background: #fff;
  box-sizing: border-box;
  white-space: nowrap;
}
.info.ul { border-bottom: 2px solid #333; }
.info.last { border-right: 1px solid #9a9a9a; }
.head {
  grid-row: span 3;
  background: #07a95a;
  color: #e6f7ea;
  font-weight: 700;
  font-size: 12.4px;
  line-height: 18px;
  display: flex;
  flex-direction: column;
  align-items: center;
  justify-content: center;
  padding-top: 4px;
  border-right: 1px solid #1d3a2a;
  border-top: 1px solid #1d3a2a;
  border-bottom: 1px solid #1d3a2a;
  box-sizing: border-box;
  white-space: nowrap;
}
.head.selected {
  position: relative;
  border: 2px solid #fff;
  outline: 1px solid #0d5f36;
}
.head.selected::after {
  content: "";
  position: absolute;
  right: -5px;
  bottom: -4px;
  width: 5px;
  height: 5px;
  background: #217346;
  border: 1px solid #fff;
}
.date-day {
  grid-column: span 20;
  background: #262626;
  color: #e8e8e8;
  font-weight: 700;
  font-size: 12.4px;
  display: flex;
  align-items: center;
  justify-content: center;
  padding-right: 370px;
  box-sizing: border-box;
  border-bottom: 1px solid #111;
}
.head-total, .head-bal {
  grid-row: span 3;
  display: flex;
  align-items: center;
  justify-content: center;
  text-align: center;
  font-weight: 700;
  font-size: 10.8px;
  letter-spacing: -0.35px;
  line-height: 17px;
  color: #222;
  padding-top: 2px;
  box-sizing: border-box;
  border-bottom: 1px solid #333;
  border-top: 1px solid #333;
}
.head-total { background: #ffff00; border-left: 1px solid #333; border-right: 1px solid #333; }
.head-bal { background: #ffc000; border-right: 1px solid #999; }
.date-c, .date-n {
  background: #3d3d3d;
  color: #e8e8e8;
  font-weight: 700;
  font-size: 12.4px;
  display: flex;
  align-items: center;
  justify-content: center;
  border-right: 1px solid #1c1c1c;
  border-bottom: 1px solid #1c1c1c;
  box-sizing: border-box;
  white-space: nowrap;
}
.date-n { padding-top: 2px; }
.cell {
  background: #fff;
  display: flex;
  align-items: center;
  justify-content: center;
  padding-top: 1px;
  font-size: 10.8px;
  letter-spacing: -0.5px;
  color: #333;
  border-right: 1px solid #222;
  border-bottom: 1px solid #1a1a1a;
  box-sizing: border-box;
  white-space: nowrap;
}
.cell.bold { font-size: 11px; letter-spacing: -0.25px; font-weight: 700; color: #1c1c1c; }
.cell.thick-r { border-right: 2px solid #444; }
.cell.thick-g { border-right: 2px solid #777; }
.cell.tb { border-bottom: 2px solid #555; }
.head.thick-r { border-right: 2px solid #1d3a2a; }

.vscroll {
  width: 18px;
  flex: none;
  background: #f3f3f3;
  display: flex;
  flex-direction: column;
  align-items: center;
  padding-top: 3px;
  gap: 1px;
  box-sizing: border-box;
}
.sb-btn {
  width: 13px;
  height: 13px;
  box-sizing: border-box;
  background: #fff;
  border: 1px solid #ababab;
  display: flex;
  align-items: center;
  justify-content: center;
  flex: none;
}
.sb-thumb { width: 13px; height: 410px; box-sizing: border-box; background: #fff; border: 1px solid #ababab; flex: none; }
.sb-track { flex: 1; }
.vscroll .sb-btn:last-child { margin-bottom: 7px; }
.arrow-up, .arrow-down {
  width: 0;
  height: 0;
  border-left: 3.5px solid transparent;
  border-right: 3.5px solid transparent;
}
.arrow-up { border-bottom: 4px solid #666; }
.arrow-down { border-top: 4px solid #666; }

/* sheet tabs */
.sheetbar {
  height: 27px;
  flex: none;
  background: #f3f3f3;
  border-top: 1px solid #c6c6c6;
  box-sizing: border-box;
  display: flex;
  align-items: flex-start;
  position: relative;
}
.tri {
  width: 0;
  height: 0;
  border-top: 3.5px solid transparent;
  border-bottom: 3.5px solid transparent;
  margin-top: 9px;
  flex: none;
}
.tri.left { margin-left: 25px; border-right: 4px solid #aaa; }
.tri.right { margin-left: 22px; border-left: 4px solid #aaa; }
.sheet-tab {
  width: 60px;
  height: 24px;
  margin: -1px 0 0 38px;
  background: #fff;
  box-sizing: border-box;
  border-left: 1px solid #d4d4d4;
  border-right: 1px solid #d4d4d4;
  border-bottom: 2px solid #217346;
  color: #217346;
  font-weight: 700;
  font-size: 13px;
  font-family: Lato, sans-serif;
  display: flex;
  align-items: center;
  justify-content: center;
  flex: none;
}
.add { margin: 4px 0 0 32px; flex: none; }
.hdots { display: flex; gap: 2px; margin: 12px 0 0 567px; flex: none; }
.hdots i { width: 2px; height: 2px; background: #999; }
.hscroll {
  display: flex;
  align-items: center;
  width: 473px;
  margin: 5px 0 0 7px;
  flex: none;
}
.h-track { flex: 1; position: relative; height: 13px; padding-left: 115px; box-sizing: border-box; }
.h-thumb { display: block; width: 175px; height: 13px; background: #fff; border: 1px solid #ababab; box-sizing: border-box; }
.tri-s { width: 0; height: 0; border-top: 3.5px solid transparent; border-bottom: 3.5px solid transparent; }
.tri-s.left { border-right: 4px solid #666; }
.tri-s.right { border-left: 4px solid #666; }

/* status bar */
.status {
  height: 21px;
  flex: none;
  background: #217346;
  color: #e9f3ed;
  display: flex;
  align-items: center;
  font-size: 11px;
  position: relative;
}
.ready { margin-left: 7px; }
.macro { margin-left: 18px; }
.views { margin-left: auto; display: flex; height: 21px; align-items: center; }
.view { width: 36px; height: 21px; display: flex; align-items: center; justify-content: center; }
.view.on { background: #185a36; }
.zoom { display: flex; align-items: center; margin-left: 3px; }
.z-sign { position: relative; width: 7px; height: 2px; background: #fff; flex: none; }
.z-sign.plus::after { content: ""; position: absolute; left: 2.5px; top: -2.5px; width: 2px; height: 7px; background: #fff; }
.z-track { width: 94px; height: 1px; background: #fff; margin: 0 3px 0 4px; position: relative; }
.z-mid { position: absolute; left: 47px; top: -3px; width: 1px; height: 7px; background: #fff; }
.z-thumb { position: absolute; left: 37px; top: -5px; width: 4px; height: 11px; background: #fff; }
.pct-text { margin: 0 13px 0 14px; font-size: 11.5px; }
.bottom { height: 2px; flex: none; background: #111; }
</style>
